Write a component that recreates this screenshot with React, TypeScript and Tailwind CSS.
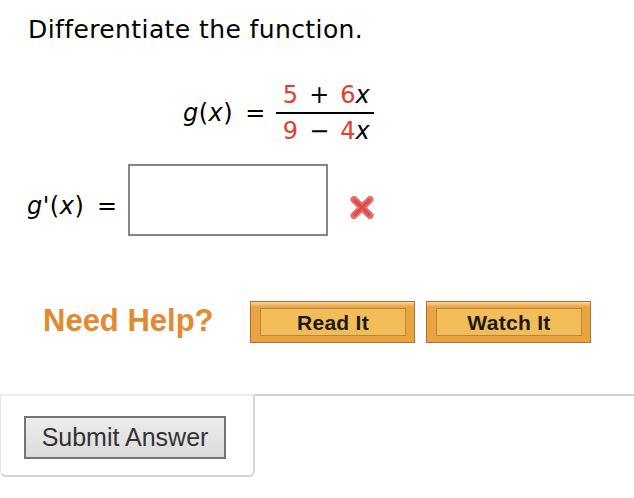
import React from "react";

const red = "text-[#e63b2e]";

function HelpButton({ label }: { label: string }) {
  return (
    <div className="w-[165px] h-[42px] border border-[#a9742f] bg-[linear-gradient(#f7d6a0_0px,#eca443_5px,#eca443_100%)] pl-[9px] pr-[8px] pt-[6px] pb-[6px]">
      <div className="w-full h-full border border-[#b9843c] bg-[#f2bd58] flex items-center justify-center">
        <span className="font-['Liberation_Sans',Arial,sans-serif] font-bold text-[21px] tracking-[0.3px] text-[#1a1a1a] leading-none">
          {label}
        </span>
      </div>
    </div>
  );
}

export default function App() {
  return (
    <div className="w-[634px] h-[498px] bg-white overflow-hidden font-['DejaVu_Sans',Verdana,sans-serif] text-black">
      {/* heading */}
      <div className="pt-[15px] pl-[28px] text-[25px] leading-[29px] tracking-[0.4px]">Differentiate the function.</div>

      {/* formula */}
      <div className="mt-[37px] flex items-center pl-[183px] text-[24px] leading-[28px]">
        <span className="tracking-[0.5px]">
          <i>g</i>(<i>x</i>)
        </span>
        <span className="ml-[12px]">=</span>
        <div className="ml-[11px] w-[98px] flex flex-col">
          <div className="flex justify-center pl-[2px]">
            <span className={red}>5</span>
            <span className="px-[11px]">+</span>
            <span className={red}>6</span>
            <i>x</i>
          </div>
          <div className="mt-[3px] h-[2px] bg-black" />
          <div className="mt-[3px] flex justify-center pl-[2px]">
            <span className={red}>9</span>
            <span className="px-[11px]">−</span>
            <span className={red}>4</span>
            <i>x</i>
          </div>
        </div>
      </div>

      {/* answer row */}
      <div className="mt-[19px] flex items-start pl-[27px] text-[24px] leading-[28px]">
        <span className="mt-[28px] w-[55px] tracking-[0.5px]">
          <i>g'</i>(<i>x</i>)
        </span>
        <span className="mt-[28px] ml-[15px]">=</span>
        <div className="ml-[11px] w-[200px] h-[72px] border-2 border-[#858585] bg-white" />
        <svg className="mt-[30px] ml-[20px]" width="28" height="27" viewBox="0 0 28 27">
          <g stroke="#e55a5a" strokeWidth="7" strokeLinecap="round" opacity="0.9">
            <line x1="6" y1="5.5" x2="22" y2="21.5" />
            <line x1="22" y1="5.5" x2="6" y2="21.5" />
          </g>
          <g stroke="#e04848" strokeWidth="3" strokeLinecap="round">
            <line x1="7" y1="6.5" x2="21" y2="20.5" />
            <line x1="21" y1="6.5" x2="7" y2="20.5" />
          </g>
        </svg>
      </div>

      {/* need help */}
      <div className="mt-[65px] flex items-start pl-[43px]">
        <span className="mt-[2px] w-[207px] font-['Liberation_Sans',Arial,sans-serif] font-bold text-[31px] leading-[35px] text-[#e3892f]">
          Need Help?
        </span>
        <HelpButton label="Read It" />
        <div className="ml-[11px]">
          <HelpButton label="Watch It" />
        </div>
      </div>

      {/* bottom */}
      <div className="mt-[51px] flex items-start">
        <div className="w-[255px] h-[83px] border-t-2 border-t-[#ededed] border-r-2 border-b-2 border-l border-r-[#d4d4d4] border-b-[#d4d4d4] border-l-[#e4e4e4] rounded-b-[6px] pt-[20px] pl-[23px]">
          <div className="w-[202px] h-[43px] border-2 border-[#747474] bg-[linear-gradient(#ededed,#dadada)] flex items-center justify-center font-['Liberation_Sans',Arial,sans-serif] text-[25px] leading-none text-[#333]">
            Submit Answer
          </div>
        </div>
        <div className="flex-1 border-t-2 border-[#d2d2d2]" />
      </div>
    </div>
  );
}
